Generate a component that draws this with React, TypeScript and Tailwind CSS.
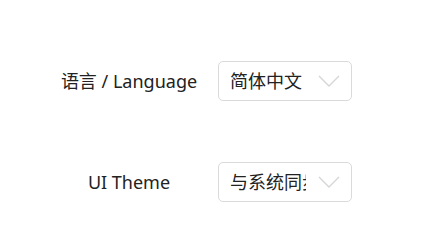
import React from "react";

function Chevron() {
  return (
    <svg width="22" height="12" viewBox="0 0 22 12" fill="none" className="shrink-0">
      <path d="M1 1L11 11L21 1" stroke="#d6d6d6" strokeWidth="1.4" />
    </svg>
  );
}

function Select({ value }: { value: string }) {
  return (
    <div className="flex items-center w-[134px] h-[40px] border border-[#dadada] rounded-[5px] bg-white pl-[11px] pr-[11px]">
      <div className="w-[76px] overflow-hidden whitespace-nowrap text-[18px] leading-[26px] text-[#222]">{value}</div>
      <div className="flex-1 flex justify-end">
        <Chevron />
      </div>
    </div>
  );
}

export default function App() {
  const font = { fontFamily: '"Noto Sans", "Noto Sans CJK SC", sans-serif' };
  return (
    <div className="w-[421px] h-[232px] bg-white pt-[61px] flex flex-col gap-[61px]" style={font}>
      <div className="flex items-center">
        <div className="ml-[40px] w-[178px] text-center text-[18px] text-[#222]">语言 / Language</div>
        <Select value="简体中文" />
      </div>
      <div className="flex items-center">
        <div className="ml-[40px] w-[178px] text-center text-[18px] text-[#222]">UI Theme</div>
        <Select value="与系统同步" />
      </div>
    </div>
  );
}
